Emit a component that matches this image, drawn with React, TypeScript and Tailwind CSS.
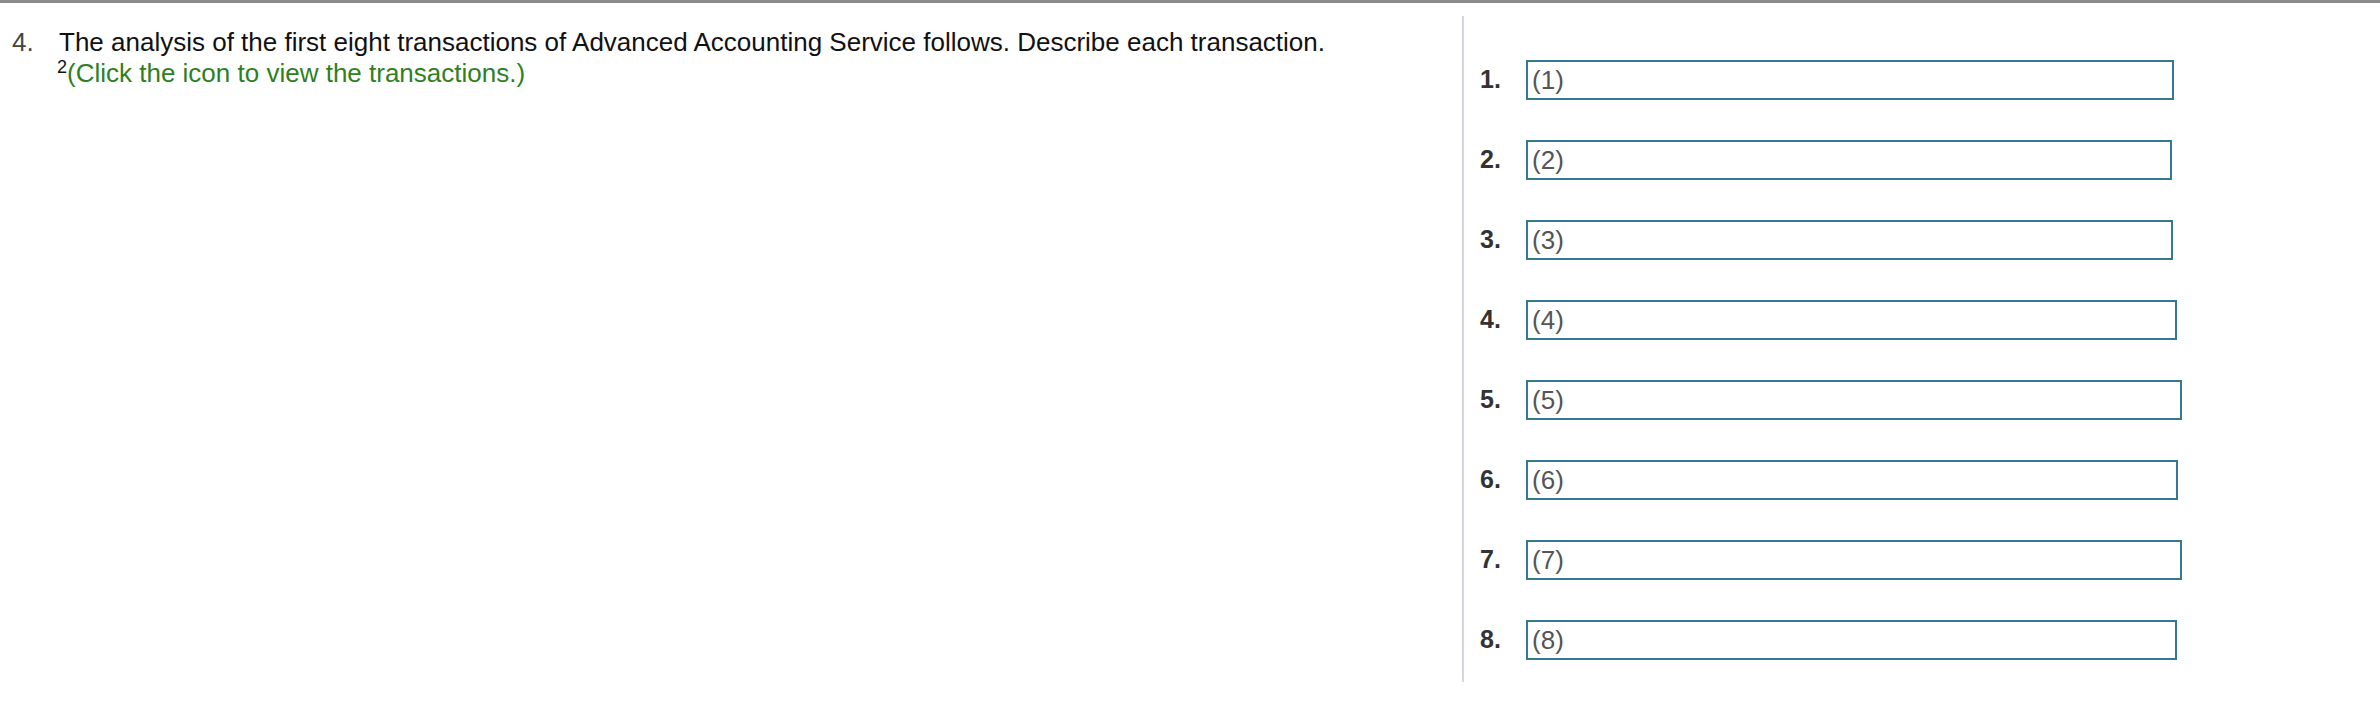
import React from 'react';

const answers = [
  { id: 1, width: 'w-[648px]' },
  { id: 2, width: 'w-[646px]' },
  { id: 3, width: 'w-[647px]' },
  { id: 4, width: 'w-[651px]' },
  { id: 5, width: 'w-[656px]' },
  { id: 6, width: 'w-[652px]' },
  { id: 7, width: 'w-[656px]' },
  { id: 8, width: 'w-[651px]' },
];

export default function App() {
  return (
    <div className="w-[2380px] h-[708px] bg-white border-t-[3px] border-[#8a8a8a] flex font-['Liberation_Sans',Arial,sans-serif]">
      <div className="w-[1462px] pl-3 pt-[24px]">
        <div className="flex text-[26px] leading-[31px]">
          <span className="w-[47px] text-[#444]">4.</span>
          <div className="text-[#111]">
            <p>The analysis of the first eight transactions of Advanced Accounting Service follows. Describe each transaction.</p>
            <p className="-ml-[2px]">
              <sup className="text-[18px]">2</sup>
              <span className="text-[#2f7f1f]">(Click the icon to view the transactions.)</span>
            </p>
          </div>
        </div>
      </div>

      <div className="w-[2px] h-[666px] mt-[13px] bg-[#d4d7e2]" />

      <div className="pl-[16px] pt-[57px] flex flex-col gap-10">
        {answers.map((a) => (
          <div key={a.id} className="flex items-center h-[40px]">
            <span className="w-[46px] text-[25px] font-bold text-[#333]">{a.id}.</span>
            <div className={`${a.width} h-[40px] border-2 border-[#337895] pl-[4px] flex items-center text-[26px] text-[#555]`}>
              ({a.id})
            </div>
          </div>
        ))}
      </div>
    </div>
  );
}
